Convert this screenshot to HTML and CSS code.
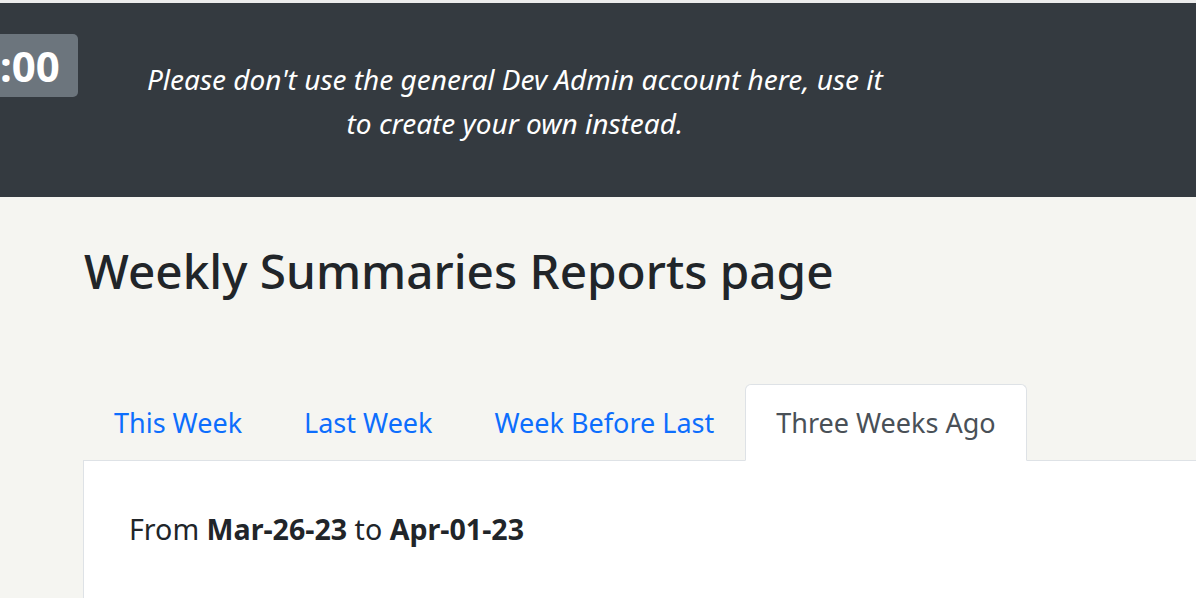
FILE: index.html
```html
<!DOCTYPE html>
<html lang="en">
<head>
<meta charset="utf-8">
<title>Weekly Summaries Reports</title>
<link rel="stylesheet" href="styles.css">
</head>
<body>
<div class="top-strip"></div>
<header class="header">
  <div class="timer">:00</div>
  <p class="notice">Please don't use the general Dev Admin account here, use it<br>to create your own instead.</p>
</header>
<main class="container">
  <h3 class="page-title">Weekly Summaries Reports page</h3>
  <nav class="tabs">
    <a class="tab" href="#">This Week</a>
    <a class="tab" href="#">Last Week</a>
    <a class="tab" href="#">Week Before Last</a>
    <a class="tab active" href="#">Three Weeks Ago</a>
  </nav>
  <section class="tab-content">
    <p class="range">From <b>Mar-26-23</b> to <b>Apr-01-23</b></p>
  </section>
</main>
</body>
</html>
```

FILE: styles.css
```css
html, body {
  margin: 0;
  padding: 0;
}
body {
  background: #f5f5f1;
  font-family: "Noto Sans", "Open Sans", sans-serif;
  color: #212529;
  overflow: hidden;
}
.top-strip {
  height: 3px;
  background: #ececec;
}
.header {
  background: #343a40;
  height: 194px;
  display: flex;
  align-items: flex-start;
}
.timer {
  margin-top: 31px;
  height: 63px;
  box-sizing: border-box;
  padding: 0 18px 0 0;
  background: #6c757d;
  color: #fff;
  font-weight: 700;
  font-size: 42px;
  line-height: 63px;
  border-radius: 0 5px 5px 0;
}
.notice {
  margin: 54px 0 0 37px;
  width: 800px;
  text-align: center;
  color: #fff;
  font-style: italic;
  font-size: 28px;
  line-height: 44px;
}
.container {
  padding-left: 84px;
}
.page-title {
  margin: 38px 0 0 0;
  font-size: 47.7px;
  font-weight: 500;
  line-height: 72px;
  color: #212529;
}
.tabs {
  margin-top: 77px;
  display: flex;
  border-bottom: 1px solid #dee2e6;
  margin-left: -1px;
}
.tab {
  display: block;
  padding: 15px 30px;
  font-size: 27px;
  line-height: 45px;
  color: #0d6efd;
  text-decoration: none;
  border: 1px solid transparent;
  border-top-left-radius: 6px;
  border-top-right-radius: 6px;
  margin-bottom: -1px;
}
.tab.active {
  color: #495057;
  background: #fff;
  border-color: #dee2e6 #dee2e6 #fff;
}
.tab-content {
  background: #fff;
  border-left: 1px solid #dee2e6;
  margin-left: -1px;
  padding: 45px 45px 48px;
}
.range {
  margin: 0;
  font-size: 28.6px;
  line-height: 45px;
}
.range b {
  font-weight: 700;
}
```
